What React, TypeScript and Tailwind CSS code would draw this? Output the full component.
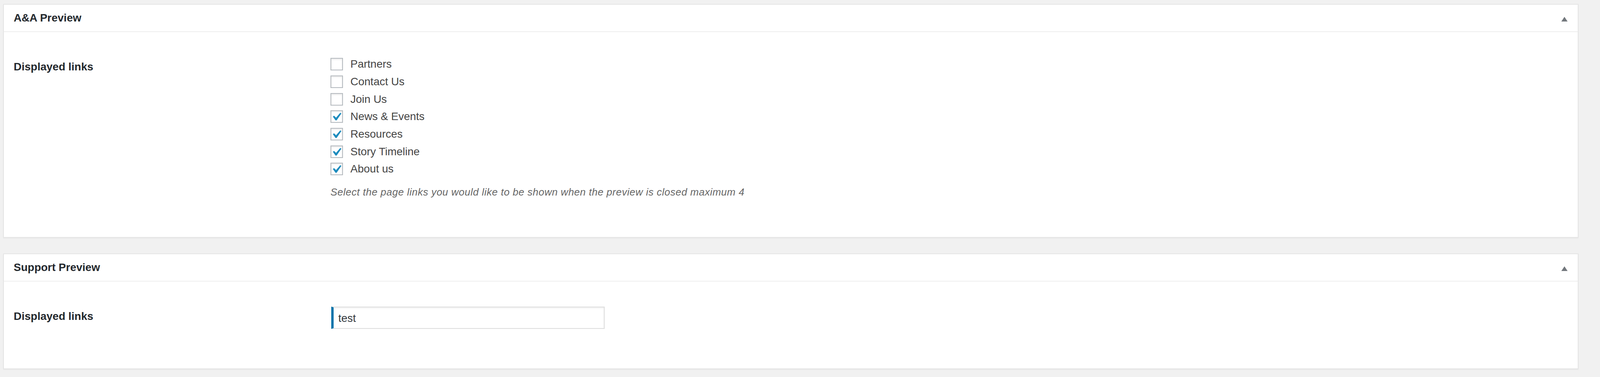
import React from 'react';

const LINKS = [
  { label: 'Partners', checked: false },
  { label: 'Contact Us', checked: false },
  { label: 'Join Us', checked: false },
  { label: 'News & Events', checked: true },
  { label: 'Resources', checked: true },
  { label: 'Story Timeline', checked: true },
  { label: 'About us', checked: true },
];

function ToggleArrow() {
  return (
    <svg width="16" height="12" viewBox="0 0 16 12" className="mr-[26px] mt-[31px] self-start shrink-0" aria-hidden>
      <polygon points="0,12 8,0 16,12" fill="#72777c" />
    </svg>
  );
}

function Checkbox({ checked }: { checked: boolean }) {
  return (
    <span className="flex h-[32px] w-[32px] shrink-0 border-2 border-[#b4b9be] bg-white shadow-[inset_0_2px_4px_rgba(0,0,0,0.1)]">
      {checked ? (
        <svg width="28" height="28" viewBox="3.81 2.86 13.33 13.33" aria-hidden>
          <path d="M14.83 4.89l1.34.94-5.81 8.38H9.02L5.78 9.67l1.34-1.25 2.57 2.4z" fill="#1e8cbe" />
        </svg>
      ) : null}
    </span>
  );
}

function Postbox({ title, children }: { title: string; children: React.ReactNode }) {
  return (
    <div className="border-2 border-[#e5e5e5] bg-white shadow-[0_2px_2px_rgba(0,0,0,0.04)]">
      <div className="flex h-[69.5px] items-center justify-between border-b-2 border-[#eeeeee]">
        <h2 className="pl-[25px] text-[28px] leading-[40px] font-semibold text-[#23282d]">{title}</h2>
        <ToggleArrow />
      </div>
      {children}
    </div>
  );
}

export default function App() {
  return (
    <div className="min-h-[964px] bg-[#f1f1f1] pl-[8px] pr-[55px] pt-[10px] font-['Liberation_Sans',Arial,sans-serif]">
      <Postbox title="A&A Preview">
        <div className="flex pl-[25px] pt-[60.67px] pb-[97px]">
          <div className="w-[811px] shrink-0 pt-[9px] text-[28px] leading-[40px] font-semibold text-[#23282d]">
            Displayed links
          </div>
          <div className="flex flex-col">
            {LINKS.map(({ label, checked }) => (
              <label key={label} className="flex h-[44.67px] items-center gap-[19px] text-[28px] leading-[40px] text-[#444444]">
                <Checkbox checked={checked} />
                <span>{label}</span>
              </label>
            ))}
            <p className="mt-[18.7px] text-[26px] leading-[36px] tracking-[0.5px] italic text-[#666666]">
              Select the page links you would like to be shown when the preview is closed maximum 4
            </p>
          </div>
        </div>
      </Postbox>

      <div className="mt-[40px]">
        <Postbox title="Support Preview">
          <div className="flex pl-[25px] pt-[64px] pb-[101px]">
            <div className="w-[813px] shrink-0 pt-[5px] text-[28px] leading-[40px] font-semibold text-[#23282d]">
              Displayed links
            </div>
            <input
              type="text"
              readOnly
              defaultValue="test"
              className="h-[57px] w-[700px] border-2 border-l-[6px] border-[#dddddd] border-l-[#0073aa] bg-white pl-[12px] pt-[12px] pb-[8px] text-[28px] leading-[33px] text-[#32373c] shadow-[inset_0_2px_4px_rgba(0,0,0,0.07)] outline-none font-['Liberation_Sans',Arial,sans-serif]"
            />
          </div>
        </Postbox>
      </div>
    </div>
  );
}
